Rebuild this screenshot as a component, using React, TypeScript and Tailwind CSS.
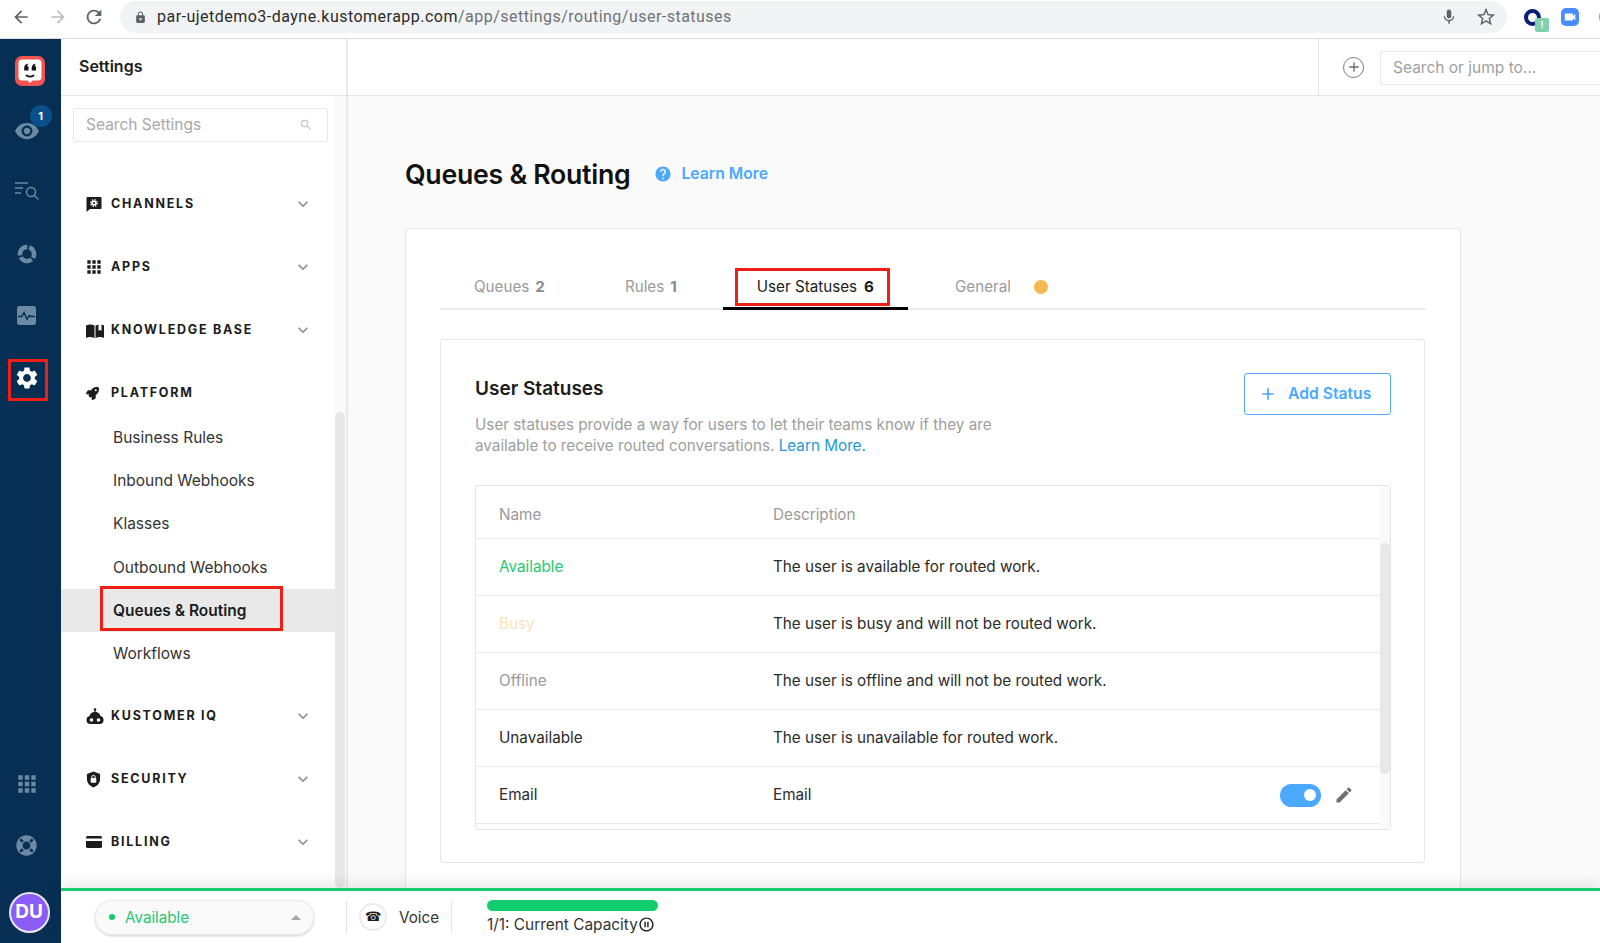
import React from 'react';
import { MdArrowBack, MdArrowForward, MdRefresh, MdLock, MdMic, MdStarBorder, MdSearch, MdKeyboardArrowDown, MdApps, MdVisibility, MdSettings, MdEdit, MdAdd, MdHelp, MdPauseCircleOutline, MdVideocam } from 'react-icons/md';
import { FaRocket, FaLifeRing } from 'react-icons/fa';

const ChannelsIcon = () => (
  <svg viewBox="0 0 16 16" className="w-[16px] h-[16px]">
    <path d="M1.5 1h13a1 1 0 0 1 1 1v10a1 1 0 0 1-1 1H4l-3.5 3V2a1 1 0 0 1 1-1z" fill="#1c1c1c" />
    <circle cx="8" cy="7" r="2.800" fill="#fff" />
    <circle cx="8" cy="7" r="3.400" fill="none" stroke="#fff" strokeWidth="1.200" strokeDasharray="1.300 1.370" />
    <circle cx="8" cy="7" r="1.100" fill="#1c1c1c" />
  </svg>
);

const BookIcon = () => (
  <svg viewBox="0 0 18 15" className="w-[18px] h-[15px]">
    <path d="M0 2.500C2.500 1 5.500 1 8.500 2.500V15C5.500 13.500 2.500 13.500 0 15z" fill="#1c1c1c" />
    <path d="M9.500 2.500C10.500 2 11.500 1.600 12.500 1.400V8l1.500-1.200L15.500 8V1.400c.9.200 1.700.5 2.500 1.100V15c-2.500-1.500-5.500-1.500-8.500 0z" fill="#1c1c1c" />
  </svg>
);

const RobotIcon = () => (
  <svg viewBox="0 0 18 16" className="w-[18px] h-[16px]">
    <circle cx="9" cy="1.500" r="1.300" fill="#1c1c1c" />
    <rect x="8.400" y="1.500" width="1.200" height="3" fill="#1c1c1c" />
    <path d="M3.500 9C3.500 5.800 6 4 9 4s5.500 1.800 5.500 5z" fill="#1c1c1c" />
    <rect x="0.500" y="8" width="17" height="8" rx="4" fill="#1c1c1c" />
    <circle cx="5.500" cy="12" r="1.800" fill="#fff" />
    <circle cx="12.500" cy="12" r="1.800" fill="#fff" />
  </svg>
);

const ShieldIcon = () => (
  <svg viewBox="0 0 16 18" className="w-[15px] h-[17px]">
    <path d="M8 .5l7 2.6v5.4c0 4.2-2.900 7.600-7 9-4.100-1.400-7-4.800-7-9V3.100z" fill="#1c1c1c" />
    <rect x="5" y="7.500" width="6" height="5" rx="1" fill="#fff" />
    <path d="M6.200 7.500V6.300a1.800 1.800 0 0 1 3.600 0v1.200" fill="none" stroke="#fff" strokeWidth="1" />
  </svg>
);

const CardIcon = () => (
  <svg viewBox="0 0 16 12" className="w-[16px] h-[12px]">
    <rect width="16" height="12" rx="1.500" fill="#1c1c1c" />
    <rect y="2.500" width="16" height="2.500" fill="#fff" />
  </svg>
);

const Logo = () => (
  <svg viewBox="0 0 30 30" className="w-[30px] h-[30px]">
    <rect width="30" height="30" rx="7" fill="#f2544f" />
    <path d="M7 3.500h16a3.500 3.500 0 0 1 3.500 3.500v14a3.500 3.500 0 0 1-3.500 3.500h-5.500L15 27l-2.500-2.500H7A3.500 3.500 0 0 1 3.500 21V7A3.500 3.500 0 0 1 7 3.500z" fill="#fff" />
    <path d="M12.800 7.500c-2.500.7-3.600 2.400-3.600 4.600v2.400h4.300v-4.300h-1.700c0-.7.400-1.100 1-1.300zM20.300 7.500c-2.500.7-3.600 2.400-3.600 4.600v2.400H21v-4.300h-1.700c0-.7.400-1.100 1-1.300z" fill="#111" />
    <path d="M11.500 19.500c2 1.300 5 1.300 7 0" fill="none" stroke="#111" strokeWidth="1.800" strokeLinecap="round" />
  </svg>
);

const QueueSearchIcon = () => (
  <svg viewBox="0 0 26 20" className="w-[26px] h-[20px]" fill="none" stroke="#6d8aa3" strokeWidth="1.500">
    <path d="M1 2h13M1 7h8M1 12h6" />
    <circle cx="17" cy="11" r="4.500" />
    <path d="M20.500 14.500l4 4" />
  </svg>
);

const DonutIcon = () => (
  <svg viewBox="0 0 20 20" className="w-[20px] h-[20px]" fill="none" stroke="#6d8aa3" strokeWidth="4.500">
    <circle cx="10" cy="10" r="7" strokeDasharray="12.500 2" transform="rotate(-70 10 10)" />
  </svg>
);

const PulseIcon = () => (
  <svg viewBox="0 0 20 20" className="w-[19px] h-[19px]">
    <rect width="20" height="20" rx="2.500" fill="#6d8aa3" />
    <path d="M1 11h4l2.500-4 3 7 2.500-4 1.500 1H19" fill="none" stroke="#072f54" strokeWidth="1.500" />
  </svg>
);

const sectionsTop = [
  { label: 'CHANNELS', icon: <ChannelsIcon />, chevron: true },
  { label: 'APPS', icon: <MdApps className="text-[#1c1c1c] w-[20px] h-[20px] ml-[-2px]" />, chevron: true },
  { label: 'KNOWLEDGE BASE', icon: <BookIcon />, chevron: true },
  { label: 'PLATFORM', icon: <FaRocket className="text-[#1c1c1c] w-[13px] h-[13px]" />, chevron: false },
];

const sectionsBottom = [
  { label: 'KUSTOMER IQ', icon: <RobotIcon /> },
  { label: 'SECURITY', icon: <ShieldIcon /> },
  { label: 'BILLING', icon: <CardIcon /> },
];

const platformItems = ['Business Rules', 'Inbound Webhooks', 'Klasses', 'Outbound Webhooks', 'Queues & Routing', 'Workflows'];

const statuses = [
  { name: 'Available', color: 'text-[#1fc974]', desc: 'The user is available for routed work.' },
  { name: 'Busy', color: 'text-[#fbe3bd]', desc: 'The user is busy and will not be routed work.' },
  { name: 'Offline', color: 'text-[#9a9a9a]', desc: 'The user is offline and will not be routed work.' },
  { name: 'Unavailable', color: 'text-[#2b2b2b]', desc: 'The user is unavailable for routed work.' },
  { name: 'Email', color: 'text-[#2b2b2b]', desc: 'Email', custom: true },
];

const SectionRow = ({ label, icon, chevron = true }: { label: string; icon: React.ReactNode; chevron?: boolean }) => (
  <div className="h-[44px] flex items-center pl-[25px] pr-[22px]">
    <span className="w-[25px] flex items-center">{icon}</span>
    <span className="text-[12.5px] font-bold tracking-[0.14em] text-[#1c1c1c]">{label}</span>
    {chevron && <MdKeyboardArrowDown className="ml-auto w-[20px] h-[20px] text-[#8e8e8e]" />}
  </div>
);

export default function App() {
  return (
    <div className="w-[1600px] h-[943px] overflow-hidden flex flex-col bg-white text-[#2b2b2b] font-['Inter','Liberation_Sans',sans-serif]">
      {/* browser chrome */}
      <div className="h-[39px] shrink-0 border-b border-[#dcdce0] flex items-start pl-[11px] overflow-hidden">
        <MdArrowBack className="shrink-0 w-[20px] h-[20px] mt-[7px] text-[#5f6368]" />
        <MdArrowForward className="shrink-0 w-[20px] h-[20px] mt-[7px] ml-[17px] text-[#b9bcc0]" />
        <MdRefresh className="shrink-0 w-[22px] h-[22px] mt-[6px] ml-[15px] text-[#5f6368]" />
        <div className="ml-[15px] mt-px w-[1387px] shrink-0 h-[32px] rounded-full bg-[#f1f3f4] flex items-center pl-[14px] pr-[10px]">
          <MdLock className="w-[13px] h-[13px] text-[#5f6368]" />
          <span className="ml-[10px] text-[16px] text-[#2b2b2b] font-['Roboto',sans-serif] tracking-[0.03em]">
            par-ujetdemo3-dayne.kustomerapp.com<span className="text-[#6f7377]">/app/settings/routing/user-statuses</span>
          </span>
          <MdMic className="ml-auto w-[18px] h-[18px] text-[#5f6368]" />
          <MdStarBorder className="ml-[17px] w-[22px] h-[22px] text-[#5f6368]" />
        </div>
        <div className="relative ml-[17px] mt-[9px] w-[17px] h-[17px] shrink-0 rounded-full border-[4px] border-[#0b1f73]">
          <span className="absolute left-[7px] top-[5px] w-[14px] h-[14px] rounded-[2px] bg-[#80d0b0] text-white text-[9px] font-bold leading-[14px] text-center">!</span>
        </div>
        <div className="ml-[20px] mt-[8px] w-[18px] h-[18px] shrink-0 rounded-[5px] bg-[#4a8cff] flex items-center justify-center">
          <MdVideocam className="w-[14px] h-[14px] text-white" />
        </div>
        <div className="ml-[20px] mt-[8px] w-[18px] h-[18px] shrink-0 rounded-full border-2 border-[#8aa0b8]" />
      </div>

      <div className="flex-1 flex min-h-0">
        {/* icon rail */}
        <div className="relative w-[61px] shrink-0 bg-[#072f54] flex flex-col items-center">
          <div className="mt-[17px] ml-[-2px]"><Logo /></div>
          <div className="w-full flex flex-col items-center pr-[8px]">
            <div className="relative mt-[33px] h-[24px] flex items-center">
              <MdVisibility className="w-[26px] h-[26px] text-[#6d8aa3]" />
              <span className="absolute left-[16px] top-[-14px] w-[22px] h-[22px] rounded-full bg-[#0b4f8a] text-white text-[11px] font-bold flex items-center justify-center">1</span>
            </div>
            <div className="mt-[38px] h-[20px]"><QueueSearchIcon /></div>
            <div className="mt-[43px] h-[20px]"><DonutIcon /></div>
            <div className="mt-[42px] h-[19px]"><PulseIcon /></div>
            <MdSettings className="mt-[40px] w-[26px] h-[26px] text-white" />
          </div>
          <div className="mt-auto w-full flex flex-col items-center pr-[8px]">
            <MdApps className="w-[26px] h-[26px] text-[#6d8aa3]" />
            <FaLifeRing className="mt-[38px] w-[21px] h-[21px] text-[#6d8aa3]" />
          </div>
          <div className="mt-[36px] mb-[10px] ml-[-3px] w-[41px] h-[41px] rounded-full bg-[#8b5cf6] border-2 border-[#e8e8ee] text-white font-bold text-[19px] flex items-center justify-center">DU</div>
          {/* annotation around the settings icon */}
          <div className="absolute left-[8px] top-[320px] w-[40px] h-[42px] border-[3px] border-[#f01e14]" />
        </div>

        <div className="flex-1 flex flex-col min-w-0">
          <div className="flex-1 flex min-h-0">
            {/* settings sidebar */}
            <div className="w-[287px] shrink-0 border-r-2 border-[#e9e9ec] flex flex-col">
              <div className="h-[57px] shrink-0 border-b border-[#e4e4e8] flex items-center pl-[18px] pb-[2px] text-[16px] font-semibold text-[#1c1c1c]">Settings</div>
              <div className="flex-1 flex min-h-0">
                <div className="w-[274px] shrink-0">
                  <div className="mt-[12px] ml-[12px] w-[255px] h-[34px] border border-[#e6e6e6] rounded-[3px] flex items-center pl-[12px] pr-[14px] text-[15.5px] text-[#a8a8a8]">
                    Search Settings
                    <MdSearch className="ml-auto w-[14px] h-[14px] text-[#c4c4c4]" />
                  </div>
                  <div className="mt-[40px] flex flex-col gap-[19px]">
                    {sectionsTop.map(s => <SectionRow key={s.label} {...s} />)}
                  </div>
                  <div className="mt-[1px]">
                    {platformItems.map(item => (
                      <div key={item} className={`relative h-[43.200px] flex items-center pl-[52px] text-[15.500px] ${item === 'Queues & Routing' ? 'bg-[#e9e9e9] font-semibold text-[#1c1c1c]' : 'text-[#333]'}`}>
                        {item}
                        {item === 'Queues & Routing' && <div className="absolute left-[39px] top-[-3px] w-[183px] h-[45px] border-[3px] border-[#f01e14]" />}
                      </div>
                    ))}
                  </div>
                  <div className="mt-[19px] flex flex-col gap-[19px]">
                    {sectionsBottom.map(s => <SectionRow key={s.label} {...s} />)}
                  </div>
                </div>
                <div className="flex-1 bg-[#fafafa] pt-[316px] pr-[1px]">
                  <div className="h-full rounded-full bg-[#e8e8e8]" />
                </div>
              </div>
            </div>

            {/* main column */}
            <div className="flex-1 flex flex-col min-w-0 bg-[#fafafa]">
              <div className="h-[57px] shrink-0 bg-white border-b border-[#e4e4e8] flex justify-end overflow-hidden">
                <div className="w-[282px] shrink-0 border-l border-[#e4e4e8] flex items-center pl-[24px]">
                  <div className="w-[21px] h-[21px] shrink-0 rounded-full border border-[#7a7a7a] flex items-center justify-center">
                    <MdAdd className="w-[16px] h-[16px] text-[#6a6a6a]" />
                  </div>
                  <div className="ml-[16px] mt-[1px] h-[34px] w-[260px] shrink-0 border border-[#e6e6e6] rounded-[3px] flex items-center pl-[12px] text-[15.500px] text-[#a0a0a0]">Search or jump to...</div>
                </div>
              </div>

              <div className="flex-1 min-h-0 overflow-hidden pl-[57px]">
                <div className="mt-[58px] h-[40px] flex items-center">
                  <h1 className="text-[26.700px] font-semibold text-[#111] tracking-[-0.01em]">Queues &amp; Routing</h1>
                  <MdHelp className="ml-[24px] w-[18px] h-[18px] text-[#4aa8ff]" />
                  <span className="ml-[9px] text-[15.700px] font-semibold text-[#4aa8ff]">Learn More</span>
                </div>

                <div className="mt-[34px] w-[1056px] h-[800px] bg-white border border-[#e6e6e6] rounded-[3px] px-[34px] pt-[35px]">
                  {/* tabs */}
                  <div className="h-[46px] border-b-2 border-[#ececec] flex gap-[12px]">
                    <div className="px-[34px] h-[46px] flex items-center text-[15.200px] text-[#9a9a9a]">Queues <b className="ml-[6px] font-bold text-[#8a8a8a]">2</b></div>
                    <div className="px-[34px] h-[46px] flex items-center text-[15.200px] text-[#9a9a9a]">Rules <b className="ml-[6px] font-bold text-[#8a8a8a]">1</b></div>
                    <div className="relative px-[34px] pt-[3px] h-[46px] flex items-center text-[15.200px] text-[#1c1c1c] border-b-[3px] border-black">
                      User Statuses <b className="ml-[7px] font-bold">6</b>
                      <div className="absolute left-[12px] top-[4px] w-[155px] h-[38px] border-[3px] border-[#f01e14]" />
                    </div>
                    <div className="px-[35px] h-[46px] flex items-center text-[15.200px] text-[#9a9a9a]">
                      General
                      <span className="ml-[23px] w-[14px] h-[14px] rounded-full bg-[#f5b74f]" />
                    </div>
                  </div>

                  {/* inner card */}
                  <div className="mt-[29px] w-[985px] h-[524px] border border-[#e6e6e6] rounded-[3px] pl-[34px] pr-[33px] pt-[33px]">
                    <div className="h-[112px] flex justify-between">
                      <div>
                        <h2 className="mt-[1px] h-[30px] flex items-center text-[19px] font-semibold text-[#1c1c1c]">User Statuses</h2>
                        <p className="mt-[10px] w-[540px] text-[15.250px] leading-[21px] text-[#9e9e9e]">
                          User statuses provide a way for users to let their teams know if they are available to receive routed conversations. <span className="text-[#1e9ad6]">Learn More.</span>
                        </p>
                      </div>
                      <div className="w-[147px] h-[42px] border-[1.500px] border-[#52a9ff] rounded-[3px] flex items-center pl-[13px] text-[15.700px] font-semibold text-[#4aa8ff]">
                        <MdAdd className="w-[20px] h-[20px]" />
                        <span className="ml-[10px]">Add Status</span>
                      </div>
                    </div>

                    {/* statuses table */}
                    <div className="h-[345px] w-[916px] border border-[#e4e4e4] rounded-[3px] flex overflow-hidden">
                      <div className="flex-1 min-w-0">
                        <div className="h-[53px] border-b border-[#e8e8e8] flex items-center pl-[23px] pt-[6px] text-[15.250px] text-[#9a9a9a]">
                          <span className="w-[274px]">Name</span>
                          <span>Description</span>
                        </div>
                        {statuses.map(s => (
                          <div key={s.name} className="h-[57px] border-b border-[#e8e8e8] flex items-center pl-[23px] text-[15.250px]">
                            <span className={`w-[274px] ${s.color}`}>{s.name}</span>
                            <span className="text-[#2b2b2b]">{s.desc}</span>
                            {s.custom && (
                              <div className="ml-auto mr-[26px] flex items-center">
                                <div className="w-[41px] h-[23px] rounded-full bg-[#4aa8ff] flex items-center justify-end pr-[5px]">
                                  <span className="w-[12px] h-[12px] rounded-full bg-white" />
                                </div>
                                <MdEdit className="ml-[13px] w-[20px] h-[20px] text-[#6f6f6f]" />
                              </div>
                            )}
                          </div>
                        ))}
                      </div>
                      <div className="w-[10px] shrink-0 bg-[#fafafa] pt-[57px]">
                        <div className="h-[231px] rounded-full bg-[#e8e8e8]" />
                      </div>
                    </div>
                  </div>
                </div>
              </div>
            </div>
          </div>

          {/* status bar */}
          <div className="relative z-10 h-[55px] shrink-0 bg-white border-t-[3px] border-[#12cc6e] shadow-[0_-6px_12px_rgba(0,0,0,0.08)] flex items-center">
            <div className="ml-[34px] w-[219px] h-[35px] rounded-full bg-[#fafafa] border border-[#ececec] shadow-[0_1px_3px_rgba(0,0,0,0.18)] flex items-center pl-[13px] pr-[12px] text-[15.200px] text-[#1fc974]">
              <span className="w-[6px] h-[6px] rounded-full bg-[#12cc6e]" />
              <span className="ml-[10px] pt-[2px]">Available</span>
              <span className="ml-auto w-0 h-0 border-x-[5px] border-x-transparent border-b-[5px] border-b-[#a8a8a8]" />
            </div>
            <div className="ml-[32px] w-px h-[33px] bg-[#e4e4e4]" />
            <div className="ml-[12px] w-[28px] h-[28px] rounded-full border-2 border-[#ececec] flex items-center justify-center text-[13px] text-[#1c1c1c] font-['DejaVu_Sans',sans-serif]">☎</div>
            <span className="ml-[12px] pt-[2px] text-[15.200px] text-[#333]">Voice</span>
            <div className="ml-[12px] w-px h-[33px] bg-[#e4e4e4]" />
            <div className="ml-[35px] w-[171px]">
              <div className="h-[11px] rounded-full bg-[#12cc6e]" />
              <div className="mt-[4px] flex items-center text-[15.400px] leading-[20px] text-[#333] whitespace-nowrap">
                1/1: Current Capacity
                <MdPauseCircleOutline className="w-[17px] h-[17px] text-[#1c1c1c]" />
              </div>
            </div>
          </div>
        </div>
      </div>
    </div>
  );
}
